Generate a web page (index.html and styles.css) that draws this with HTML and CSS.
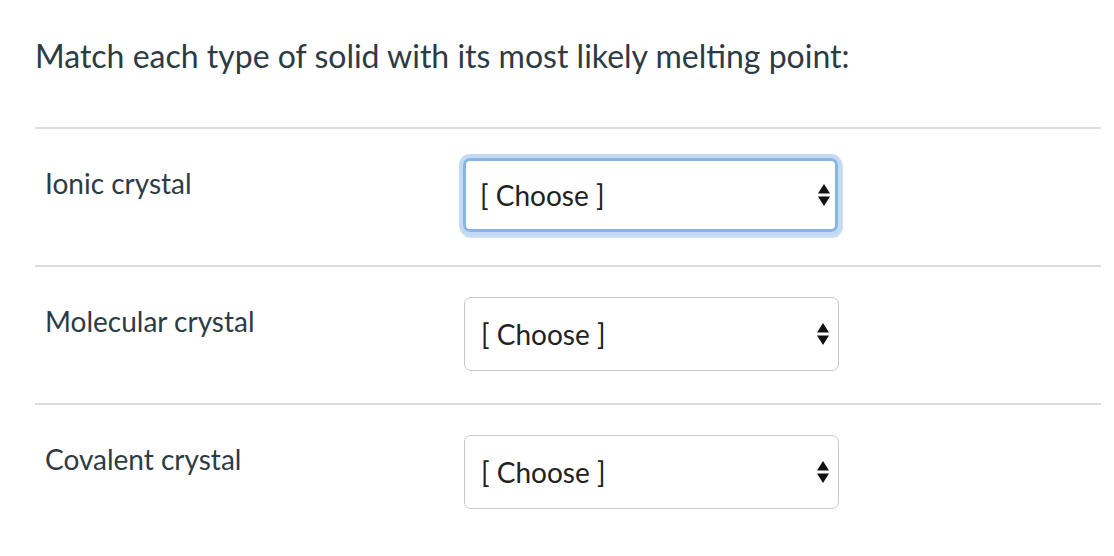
FILE: index.html
```html
<!DOCTYPE html>
<html>
<head>
<meta charset="utf-8">
<link rel="stylesheet" href="styles.css">
</head>
<body>
<div class="page">
  <h1 class="title">Match each type of solid with its most likely melting point:</h1>
  <div class="rows">
    <div class="row">
      <div class="label">Ionic crystal</div>
      <div class="select focused"><span class="val">[ Choose ]</span>
        <svg class="arrows" width="12" height="22" viewBox="0 0 12 22"><path d="M6 0 L12 9.5 L0 9.5 Z M0 12.5 L12 12.5 L6 22 Z" fill="#111"/></svg>
      </div>
    </div>
    <div class="row">
      <div class="label">Molecular crystal</div>
      <div class="select"><span class="val">[ Choose ]</span>
        <svg class="arrows" width="12" height="22" viewBox="0 0 12 22"><path d="M6 0 L12 9.5 L0 9.5 Z M0 12.5 L12 12.5 L6 22 Z" fill="#111"/></svg>
      </div>
    </div>
    <div class="row">
      <div class="label">Covalent crystal</div>
      <div class="select"><span class="val">[ Choose ]</span>
        <svg class="arrows" width="12" height="22" viewBox="0 0 12 22"><path d="M6 0 L12 9.5 L0 9.5 Z M0 12.5 L12 12.5 L6 22 Z" fill="#111"/></svg>
      </div>
    </div>
  </div>
</div>
</body>
</html>
```
FILE: styles.css
```css
html, body {
  margin: 0;
  padding: 0;
  background: #fff;
}
body {
  font-family: Lato, "Open Sans", sans-serif;
  color: #2d3b45;
}
.page {
  padding: 0 13px 0 35px;
}
.title {
  margin: 0;
  padding-top: 36px;
  height: 127px;
  box-sizing: border-box;
  font-size: 32px;
  font-weight: 400;
  line-height: 40px;
}
.rows {
  border-top: 2px solid #dcdcdc;
}
.row {
  display: flex;
  align-items: flex-start;
  height: 136px;
  border-bottom: 2px solid #dcdcdc;
}
.row:last-child {
  border-bottom: none;
}
.label {
  width: 419px;
  padding-left: 10px;
  padding-top: 37px;
  font-size: 28px;
  line-height: 34px;
}
.select {
  margin-top: 30px;
  width: 375px;
  height: 74px;
  box-sizing: border-box;
  border: 1px solid #c4c9cc;
  border-radius: 7px;
  display: flex;
  align-items: center;
  justify-content: space-between;
  padding: 0 9px 0 16px;
  font-size: 28px;
  color: #222;
}
.select.focused {
  border: 3px solid #88b3e3;
  box-shadow: 0 0 0 4px #c3daf2, 1px 2px 1px 4px #c9ddf2;
  margin-top: 29px;
  margin-left: -1px;
  padding-left: 14px;
  padding-right: 5px;
}
.arrows {
  display: block;
}
```
